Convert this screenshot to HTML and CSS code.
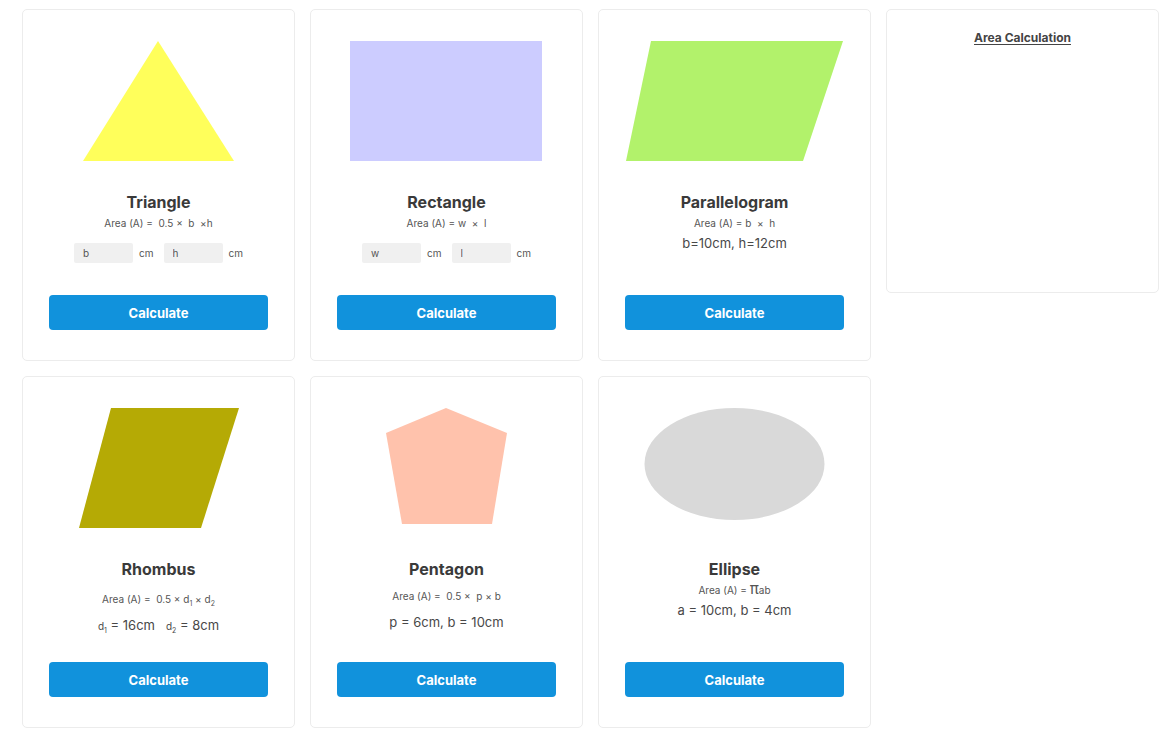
FILE: index.html
```html
<!DOCTYPE html>
<html lang="en">
<head>
<meta charset="utf-8">
<title>Area Calculation</title>
<link rel="stylesheet" href="styles.css">
</head>
<body>
<main class="grid">
  <section class="card shape-card">
    <svg class="shape" viewBox="0 0 271 120"><polygon points="135,0 211,120 60,120" fill="#ffff5b"/></svg>
    <h2 class="title">Triangle</h2>
    <p class="formula">Area (A) = &nbsp;0.5 × &nbsp;b &nbsp;×h</p>
    <div class="inputs">
      <input class="field" type="text" placeholder="b"><span class="unit">cm</span>
      <input class="field" type="text" placeholder="h"><span class="unit">cm</span>
    </div>
    <button class="btn">Calculate</button>
  </section>

  <section class="card shape-card">
    <svg class="shape" viewBox="0 0 271 120"><rect x="39" y="0" width="192" height="120" fill="#ccccff"/></svg>
    <h2 class="title">Rectangle</h2>
    <p class="formula">Area (A) = w &nbsp;× &nbsp;l</p>
    <div class="inputs">
      <input class="field" type="text" placeholder="w"><span class="unit">cm</span>
      <input class="field" type="text" placeholder="l"><span class="unit">cm</span>
    </div>
    <button class="btn">Calculate</button>
  </section>

  <section class="card shape-card">
    <svg class="shape" viewBox="0 0 271 120"><polygon points="52,0 244,0 204,120 27,120" fill="#b2f26b"/></svg>
    <h2 class="title">Parallelogram</h2>
    <p class="formula">Area (A) = b &nbsp;× &nbsp;h</p>
    <p class="values values-tight">b=10cm, h=12cm</p>
    <button class="btn">Calculate</button>
  </section>

  <section class="card info-card">
    <h2 class="info-title">Area Calculation</h2>
  </section>

  <section class="card shape-card">
    <svg class="shape" viewBox="0 0 271 120"><polygon points="88,0 216,0 178,120 56,120" fill="#b5aa05"/></svg>
    <h2 class="title">Rhombus</h2>
    <p class="formula formula-low">Area (A) = &nbsp;0.5 × d<sub>1</sub> × d<sub>2</sub></p>
    <p class="values values-wide"><span class="var">d<sub>1</sub></span> = 16cm &nbsp;&nbsp;<span class="var">d<sub>2</sub></span> = 8cm</p>
    <button class="btn">Calculate</button>
  </section>

  <section class="card shape-card">
    <svg class="shape" viewBox="0 0 271 120"><polygon points="135,0 196,25 181,116 91,116 75,25" fill="#ffc2ac"/></svg>
    <h2 class="title">Pentagon</h2>
    <p class="formula formula-mid">Area (A) = &nbsp;0.5 × &nbsp;p × b</p>
    <p class="values values-wide">p = 6cm, b = 10cm</p>
    <button class="btn">Calculate</button>
  </section>

  <section class="card shape-card">
    <svg class="shape" viewBox="0 0 271 120"><ellipse cx="135.5" cy="56" rx="90" ry="56" fill="#d9d9d9"/></svg>
    <h2 class="title">Ellipse</h2>
    <p class="formula">Area (A) = <span class="pi">π</span>ab</p>
    <p class="values values-tight">a = 10cm, b = 4cm</p>
    <button class="btn">Calculate</button>
  </section>
</main>
</body>
</html>
```

FILE: styles.css
```css
* { box-sizing: border-box; }

html, body {
  margin: 0;
  background: #ffffff;
}

body {
  padding: 9px 22px;
  font-family: Inter, "Liberation Sans", sans-serif;
  color: #3a3a3a;
}

.grid {
  display: grid;
  grid-template-columns: repeat(4, 273px);
  column-gap: 15px;
  row-gap: 15px;
  align-items: start;
}

.card {
  background: #ffffff;
  border: 1px solid #ececec;
  border-radius: 5px;
}

.shape-card {
  height: 352px;
  display: flex;
  flex-direction: column;
  align-items: center;
  padding: 31px 0 30px;
}

.shape {
  display: block;
  width: 271px;
  height: 120px;
  flex: none;
}

.title {
  margin: 31px 0 0;
  font-size: 16px;
  line-height: 20px;
  font-weight: 700;
  color: #3a3a3a;
}

.formula {
  margin: 4px 0 0;
  font-size: 10px;
  line-height: 14px;
  color: #555555;
}

.formula-low { margin-top: 13px; }
.formula-mid { margin-top: 10px; }

.formula sub, .values sub {
  font-size: 7px;
  line-height: 0;
}

.pi {
  font-size: 15px;
  line-height: 0;
}

.values {
  margin: 5px 0 0;
  font-size: 13px;
  line-height: 16px;
  color: #484848;
}

.values-tight { margin-top: 5px; }
.values-wide { margin-top: 11px; }

.var {
  font-size: 10px;
}

.inputs {
  margin-top: 13px;
  display: flex;
  align-items: center;
}

.field {
  width: 59px;
  height: 20px;
  border: none;
  border-radius: 2px;
  background: #f0f0f0;
  padding: 0 0 0 9px;
  font-family: Inter, "Liberation Sans", sans-serif;
  font-size: 10px;
  color: #555555;
  outline: none;
}

.field::placeholder { color: #555555; }

.unit {
  margin: 0 10px 0 6px;
  font-size: 10px;
  color: #555555;
}

.unit:last-child { margin-right: 0; }

.btn {
  margin-top: auto;
  width: 219px;
  height: 35px;
  border: none;
  border-radius: 4px;
  background: #1192dc;
  color: #ffffff;
  font-family: Inter, "Liberation Sans", sans-serif;
  font-size: 13px;
  font-weight: 700;
}

.info-card {
  height: 284px;
  padding-top: 20px;
  text-align: center;
}

.info-title {
  margin: 0;
  font-size: 12px;
  line-height: 15px;
  font-weight: 700;
  color: #444444;
  text-decoration: underline;
  text-underline-offset: 2px;
}
```
